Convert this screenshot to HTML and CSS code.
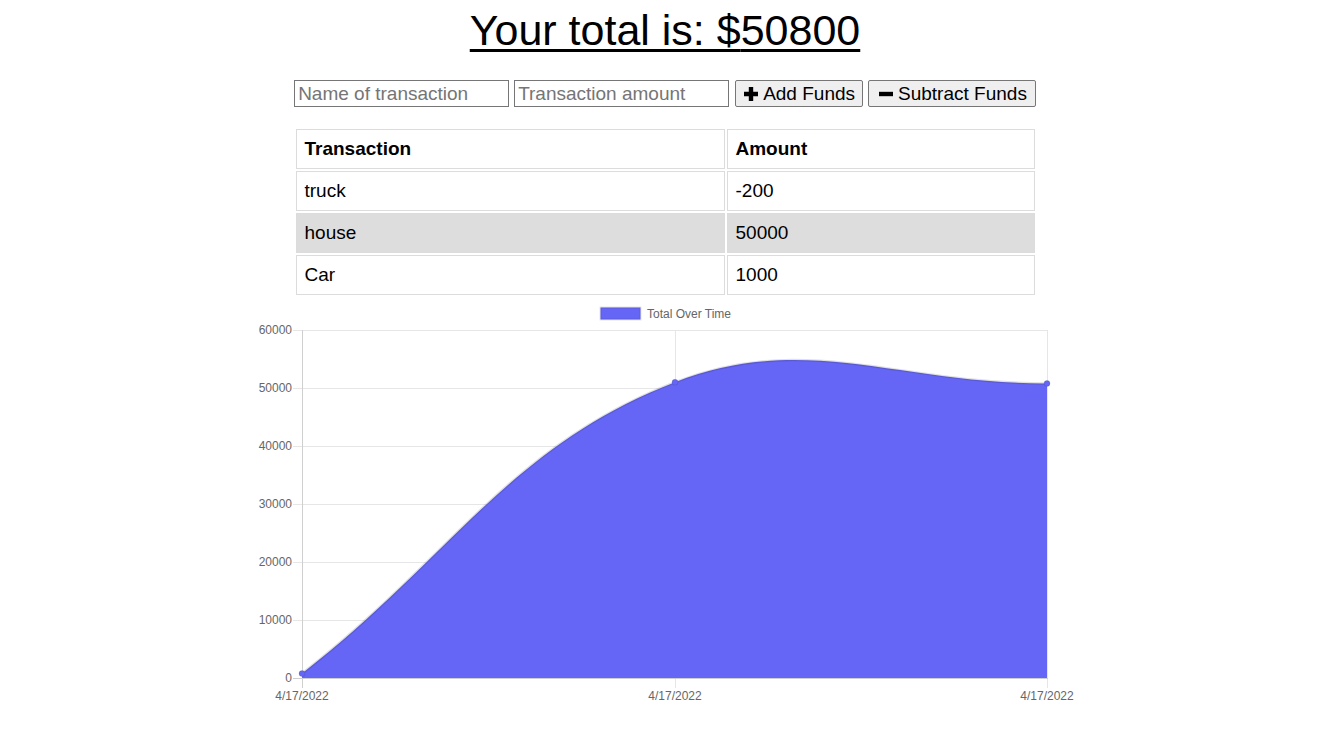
FILE: index.html
```html
<!DOCTYPE html>
<html>
<head>
<meta charset="utf-8">
<link rel="stylesheet" href="styles.css">
<title>Budget</title>
</head>
<body>
<main class="page">
  <h1 class="total">Your total is: $<span>50800</span></h1>
  <form class="form-row">
    <input class="field" type="text" placeholder="Name of transaction">
    <input class="field" type="number" placeholder="Transaction amount">
    <button class="btn" type="button"><svg class="ico" viewBox="0 0 16 16"><path d="M5.8 1h4.4v4.8H15v4.4h-4.8V15H5.8v-4.8H1V5.8h4.8z"/></svg>Add Funds</button>
    <button class="btn" type="button"><svg class="ico" viewBox="0 0 16 16"><path d="M1 5.8h14v4.4H1z"/></svg>Subtract Funds</button>
  </form>
  <table class="tx">
    <colgroup><col class="c1"><col class="c2"></colgroup>
    <thead>
      <tr><th>Transaction</th><th>Amount</th></tr>
    </thead>
    <tbody>
      <tr><td>truck</td><td>-200</td></tr>
      <tr class="alt"><td>house</td><td>50000</td></tr>
      <tr><td>Car</td><td>1000</td></tr>
    </tbody>
  </table>
  <svg class="chart" viewBox="245 300 840 410" width="840" height="410">
    <g class="grid">
      <line x1="293" y1="329.5" x2="1047" y2="329.5"/>
      <line x1="293" y1="387.5" x2="1047" y2="387.5"/>
      <line x1="293" y1="445.5" x2="1047" y2="445.5"/>
      <line x1="293" y1="503.5" x2="1047" y2="503.5"/>
      <line x1="293" y1="561.5" x2="1047" y2="561.5"/>
      <line x1="293" y1="619.5" x2="1047" y2="619.5"/>
      <line x1="675.5" y1="329" x2="675.5" y2="687"/>
      <line x1="1047.5" y1="329" x2="1047.5" y2="687"/>
    </g>
    <g class="axis">
      <line x1="302.5" y1="329" x2="302.5" y2="687"/>
      <line x1="293" y1="677.5" x2="1048" y2="677.5"/>
    </g>
    <g class="ylab">
      <text x="292" y="333">60000</text>
      <text x="292" y="391">50000</text>
      <text x="292" y="449">40000</text>
      <text x="292" y="507">30000</text>
      <text x="292" y="565">20000</text>
      <text x="292" y="623">10000</text>
      <text x="292" y="681">0</text>
    </g>
    <g class="xlab">
      <text x="302" y="699">4/17/2022</text>
      <text x="675" y="699">4/17/2022</text>
      <text x="1047" y="699">4/17/2022</text>
    </g>
    <path class="area" d="M302 672.5 C451.2 556.5 508.3 445.8 675 381.2 C806.3 330.3 898.2 382.9 1047 382.4 L1047 677 L302 677 Z"/>
    <path class="line" d="M302 672.5 C451.2 556.5 508.3 445.8 675 381.2 C806.3 330.3 898.2 382.9 1047 382.4"/>
    <circle class="pt" cx="302" cy="672.5" r="3"/>
    <circle class="pt" cx="675" cy="381.2" r="3"/>
    <circle class="pt" cx="1047" cy="382.4" r="3"/>
    <rect class="legend-box" x="600.5" y="306.5" width="40" height="12"/>
    <text class="legend-text" x="647" y="317">Total Over Time</text>
  </svg>
</main>
</body>
</html>
```
FILE: styles.css
```css
html, body {
  margin: 0;
  padding: 0;
  background: #fff;
}
body {
  font-family: "Liberation Sans", Arial, Helvetica, sans-serif;
  color: #000;
}
.page {
  display: flex;
  flex-direction: column;
  align-items: center;
}
.total {
  margin: 6px 0 0;
  font-size: 43px;
  font-weight: normal;
  line-height: 49px;
  text-decoration: underline;
  text-decoration-thickness: 3px;
  text-underline-offset: 4px;
}
.form-row {
  display: flex;
  gap: 5px;
  margin-top: 25px;
}
.field {
  box-sizing: border-box;
  width: 215px;
  height: 27px;
  margin: 0;
  padding: 0 3px;
  border: 1px solid #767676;
  border-radius: 0;
  font-family: inherit;
  font-size: 19px;
  color: #000;
  -moz-appearance: textfield;
}
.field::placeholder {
  color: #757575;
}
.field::-webkit-outer-spin-button,
.field::-webkit-inner-spin-button {
  -webkit-appearance: none;
  margin: 0;
}
.btn {
  box-sizing: border-box;
  height: 27px;
  margin: 0 0 0 1px;
  padding: 0 7px;
  display: inline-flex;
  align-items: center;
  gap: 4px;
  background: #efefef;
  border: 1px solid #767676;
  border-radius: 2px;
  font-family: inherit;
  font-size: 19px;
  color: #000;
}
.btn + .btn {
  margin-left: 0;
  padding: 0 8px 0 9px;
}
.ico {
  width: 16px;
  height: 16px;
  fill: #000;
}
.tx {
  margin-top: 20px;
  width: 743px;
  table-layout: fixed;
  border-collapse: separate;
  border-spacing: 2px;
  font-size: 19px;
}
.c1 { width: 429px; }
.tx th, .tx td {
  border: 1px solid #dcdcdc;
  padding: 8px 8px;
  line-height: 22px;
  text-align: left;
}
.tx th {
  font-weight: bold;
}
.tx .alt td {
  background: #dddddd;
}
.chart {
  display: block;
  margin-top: 4px;
  font-family: "Liberation Sans", Arial, Helvetica, sans-serif;
}
.grid line {
  stroke: #e6e6e6;
  stroke-width: 1;
}
.axis line {
  stroke: #cfcfcf;
  stroke-width: 1;
}
.ylab text {
  font-size: 12px;
  fill: #666;
  text-anchor: end;
}
.xlab text {
  font-size: 12px;
  fill: #666;
  text-anchor: middle;
}
.area {
  fill: #6666f6;
}
.line {
  fill: none;
  stroke: rgba(0, 0, 0, 0.12);
  stroke-width: 2.5;
}
.pt {
  fill: #6666f6;
  stroke: rgba(0, 0, 0, 0.1);
  stroke-width: 1;
}
.legend-box {
  fill: #6666f6;
  stroke: rgba(0, 0, 0, 0.1);
  stroke-width: 2;
}
.legend-text {
  font-size: 12px;
  fill: #666;
}
```
